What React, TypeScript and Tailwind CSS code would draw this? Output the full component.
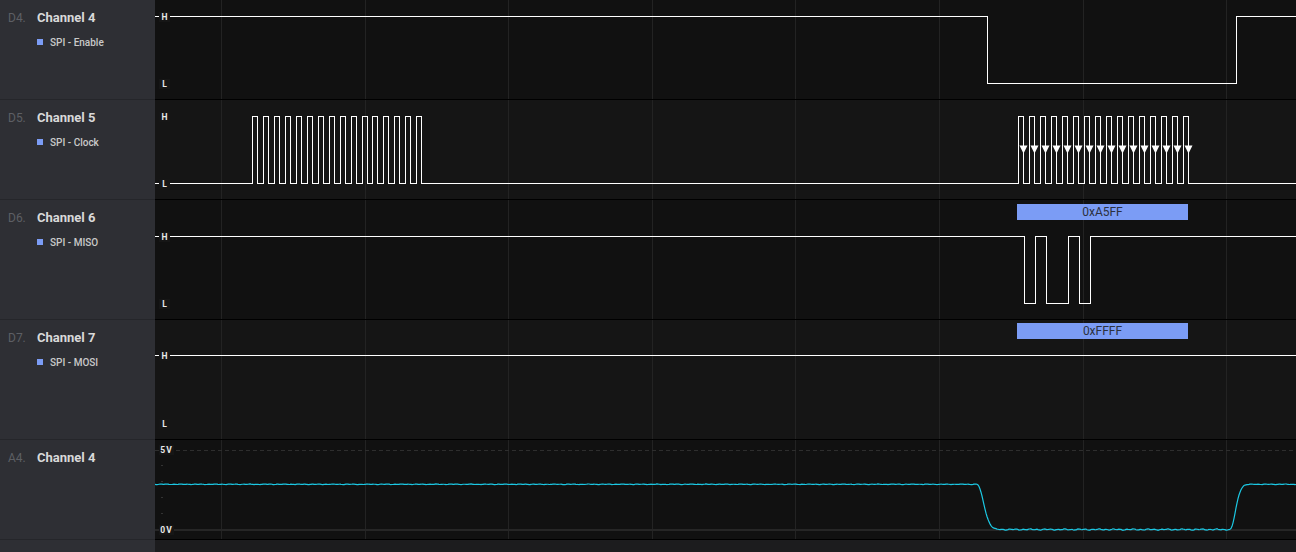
import React from 'react'

const CHART_W = 1141
const GRID = Array.from({ length: 8 }, (_, i) => Math.round(66 + i * 143.6) + 0.5)

const FONT = { fontFamily: 'Roboto, "Noto Sans", sans-serif' }

function digitalPath(startHigh: boolean, edges: number[], hi: number, lo: number) {
  let high = startHigh
  let d = `M0,${high ? hi : lo}`
  for (const x of edges) {
    high = !high
    d += ` H${x} V${high ? hi : lo}`
  }
  d += ` H${CHART_W}`
  return d
}

function clockEdges(start: number, period: number, count: number) {
  const out: number[] = []
  for (let i = 0; i < count; i++) {
    const r = Math.round(start + i * period) + 0.5
    out.push(r, r + 5)
  }
  return out
}

function analogPath() {
  const hi = 44.3
  const lo = 89.5
  const pts: string[] = []
  for (let x = 0; x <= CHART_W; x++) {
    let y = hi
    let amp = 0.35
    if (x >= 822 && x < 1075) {
      const t = x - 822
      y = hi + (lo - hi) * (1 - Math.exp(-Math.pow(t / 9, 2)))
      if (t > 25) amp = 0.8
    } else if (x >= 1075) {
      const t = x - 1075
      y = lo - (lo - hi) * (1 - Math.exp(-Math.pow(t / 7.5, 2)))
    }
    const n = Math.sin(x * 0.91) * 0.5 + Math.sin(x * 0.37 + 1.3) * 0.35 + Math.sin(x * 2.3) * 0.15
    y += n * amp
    pts.push(`${x},${y.toFixed(2)}`)
  }
  return 'M' + pts.join(' L')
}

function Level({ x, y, label, wide }: { x: number; y: number; label: string; wide?: boolean }) {
  const w = wide ? 15 : 11
  return (
    <g>
      <rect x={x} y={y - 5} width={w} height={10} fill="#161616" />
      <text
        x={x + w / 2}
        y={y + 3}
        textAnchor="middle"
        fontSize={8.5}
        fontWeight={700}
        fill="#e8e8e8"
        letterSpacing={wide ? 1 : 0}
        style={FONT}
      >
        {label}
      </text>
    </g>
  )
}

function Grid({ h }: { h: number }) {
  return (
    <>
      {GRID.map((x) => (
        <line key={x} x1={x} x2={x} y1={0} y2={h} stroke="#232323" strokeWidth={1} />
      ))}
    </>
  )
}

function ChannelLabel({ id, name, tag, height }: { id: string; name: string; tag?: string; height: string }) {
  return (
    <div className={`${height} w-[155px] shrink-0 bg-[#2e2f34] border-b border-[#25262a] pl-2 pt-[10px]`} style={FONT}>
      <div className="flex items-center h-4">
        <span className="w-[29px] text-[12px] text-[#5d5f64]">{id}</span>
        <span className="text-[13px] font-bold text-[#d9d9d9]">{name}</span>
      </div>
      {tag && (
        <div className="flex items-center gap-[7px] ml-[29px] mt-[9px] h-[14px]">
          <span className="w-[6px] h-[6px] bg-[#7b9cf5]" />
          <span className="text-[10px] font-medium text-[#c9c9c9]">{tag}</span>
        </div>
      )}
    </div>
  )
}

function DecodeBox({ y, text }: { y: number; text: string }) {
  return (
    <g>
      <rect x={862} y={y} width={171} height={16} fill="#7b9cf5" />
      <text x={947.5} y={y + 12} textAnchor="middle" fontSize={12} fill="#2b3140" style={FONT}>
        {text}
      </text>
    </g>
  )
}

function Chart({ h, bg, children }: { h: number; bg: string; children: React.ReactNode }) {
  return (
    <div className={`relative flex-1 border-b border-black ${bg}`}>
      <svg width={CHART_W} height={h - 1} className="absolute top-0 left-0 block" shapeRendering="crispEdges">
        <Grid h={h - 1} />
        {children}
      </svg>
    </div>
  )
}

export default function App() {
  const clock = [...clockEdges(97.3, 10.92, 16), ...clockEdges(863.3, 10.96, 16)]
  const arrows = clockEdges(863.3, 10.96, 16).filter((_, i) => i % 2 === 1)

  return (
    <div className="w-[1296px] h-[552px] overflow-hidden flex flex-col bg-[#111111]">
      <div className="flex h-[100px]">
        <ChannelLabel id="D4." name="Channel 4" tag="SPI - Enable" height="h-[100px]" />
        <Chart h={100} bg="bg-[#111111]">
          <path d={digitalPath(true, [832.5, 1081.5], 16.5, 83.5)} stroke="#ffffff" fill="none" strokeWidth={1} />
          <Level x={4} y={16.5} label="H" />
          <Level x={4} y={84} label="L" />
        </Chart>
      </div>

      <div className="flex h-[100px]">
        <ChannelLabel id="D5." name="Channel 5" tag="SPI - Clock" height="h-[100px]" />
        <Chart h={100} bg="bg-[#151515]">
          <path d={digitalPath(false, clock, 16.5, 83.5)} stroke="#ffffff" fill="none" strokeWidth={1} />
          {arrows.map((x) => (
            <polygon
              key={x}
              points={`${x - 4},45.5 ${x + 4},45.5 ${x},53.5`}
              fill="#ffffff"
              shapeRendering="geometricPrecision"
            />
          ))}
          <Level x={4} y={16.5} label="H" />
          <Level x={4} y={84} label="L" />
        </Chart>
      </div>

      <div className="flex h-[120px]">
        <ChannelLabel id="D6." name="Channel 6" tag="SPI - MISO" height="h-[120px]" />
        <Chart h={120} bg="bg-[#111111]">
          <DecodeBox y={4} text="0xA5FF" />
          <path
            d={digitalPath(true, [869.5, 880.5, 891.5, 913.5, 924.5, 935.5], 36.5, 103.5)}
            stroke="#ffffff"
            fill="none"
            strokeWidth={1}
          />
          <Level x={4} y={36.5} label="H" />
          <Level x={4} y={104} label="L" />
        </Chart>
      </div>

      <div className="flex h-[120px]">
        <ChannelLabel id="D7." name="Channel 7" tag="SPI - MOSI" height="h-[120px]" />
        <Chart h={120} bg="bg-[#151515]">
          <DecodeBox y={3} text="0xFFFF" />
          <path d={digitalPath(true, [], 35.5, 103.5)} stroke="#ffffff" fill="none" strokeWidth={1} />
          <Level x={4} y={35.5} label="H" />
          <Level x={4} y={104} label="L" />
        </Chart>
      </div>

      <div className="flex h-[100px]">
        <ChannelLabel id="A4." name="Channel 4" height="h-[100px]" />
        <Chart h={100} bg="bg-[#111111]">
          <line x1={0} x2={CHART_W} y1={10.5} y2={10.5} stroke="#2e2e2e" strokeWidth={1} strokeDasharray="4 3" />
          <line x1={0} x2={CHART_W} y1={90} y2={90} stroke="#262626" strokeWidth={2} />
          {[25, 41, 57, 73].map((y) => (
            <rect key={y} x={6} y={y} width={2} height={1} fill="#333333" />
          ))}
          <path
            d={analogPath()}
            stroke="#1cc8e3"
            fill="none"
            strokeWidth={1.2}
            shapeRendering="geometricPrecision"
          />
          <Level x={4} y={10} label="5V" wide />
          <Level x={4} y={90} label="0V" wide />
        </Chart>
      </div>

      <div className="flex flex-1">
        <div className="w-[155px] bg-[#2e2f34]" />
        <div className="flex-1 bg-[#1c1c1e]" />
      </div>
    </div>
  )
}
